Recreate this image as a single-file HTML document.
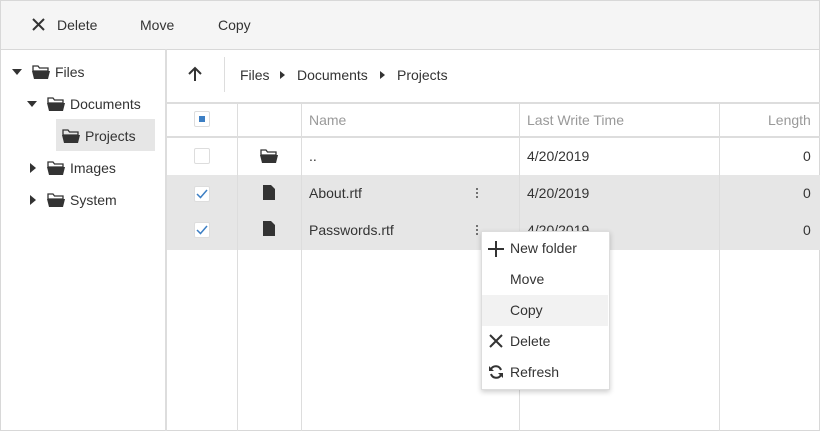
<!DOCTYPE html>
<html><head><style>
*{box-sizing:border-box;margin:0;padding:0}
body{width:820px;height:431px;overflow:hidden;font-family:"Segoe UI","Liberation Sans",sans-serif;font-size:14px;color:#333;background:#fff;position:relative}
.abs{position:absolute}
.t{position:absolute;white-space:nowrap;line-height:16px}
.vl{position:absolute;width:1px;background:#ddd}
.hl{position:absolute;height:1px;background:#ddd}
.cb{position:absolute;width:16px;height:16px;border:1px solid #ddd;background:#fff;border-radius:2px}
.kb{position:absolute;width:2px;height:12px;background:radial-gradient(circle,#555 0.9px,transparent 1.1px) 0 0/2px 4px repeat-y}
</style></head><body>
<div class="abs" style="left:0;top:0;width:820px;height:431px;border:1px solid #d8d8d8"></div>
<div class="abs" style="left:1px;top:1px;width:818px;height:48px;background:#f5f5f5"></div>
<div class="hl" style="left:0;top:49px;width:820px;background:#d8d8d8"></div>
<svg class="abs" style="left:31px;top:17px" width="15" height="15" viewBox="0 0 15 15"><path d="M2 2L13 13M13 2L2 13" stroke="#333" stroke-width="2"/></svg>
<div class="t" style="left:57px;top:17px">Delete</div>
<div class="t" style="left:140px;top:17px">Move</div>
<div class="t" style="left:218px;top:17px">Copy</div>
<div class="vl" style="left:165px;top:49px;height:382px;width:2px;background:#ddd"></div>
<svg class="abs" style="left:12px;top:69px" width="10" height="6"><path d="M0 0H10L5 6Z" fill="#333"/></svg>
<svg class="abs" style="left:32px;top:64px" width="18" height="16" viewBox="0 0 18 16"><path d="M1 2H6L7.5 4H16V7H1Z" fill="none" stroke="#333" stroke-width="1.3"/><path d="M0 7H18L16 15H2Z" fill="#333"/></svg>
<div class="t" style="left:55px;top:64px">Files</div>
<svg class="abs" style="left:27px;top:101px" width="10" height="6"><path d="M0 0H10L5 6Z" fill="#333"/></svg>
<svg class="abs" style="left:47px;top:96px" width="18" height="16" viewBox="0 0 18 16"><path d="M1 2H6L7.5 4H16V7H1Z" fill="none" stroke="#333" stroke-width="1.3"/><path d="M0 7H18L16 15H2Z" fill="#333"/></svg>
<div class="t" style="left:70px;top:96px">Documents</div>
<div class="abs" style="left:56px;top:119px;width:99px;height:32px;background:#e6e6e6"></div>
<svg class="abs" style="left:62px;top:128px" width="18" height="16" viewBox="0 0 18 16"><path d="M1 2H6L7.5 4H16V7H1Z" fill="none" stroke="#333" stroke-width="1.3"/><path d="M0 7H18L16 15H2Z" fill="#333"/></svg>
<div class="t" style="left:85px;top:128px">Projects</div>
<svg class="abs" style="left:30px;top:163px" width="6" height="10"><path d="M0 0V10L6 5Z" fill="#333"/></svg>
<svg class="abs" style="left:47px;top:160px" width="18" height="16" viewBox="0 0 18 16"><path d="M1 2H6L7.5 4H16V7H1Z" fill="none" stroke="#333" stroke-width="1.3"/><path d="M0 7H18L16 15H2Z" fill="#333"/></svg>
<div class="t" style="left:70px;top:160px">Images</div>
<svg class="abs" style="left:30px;top:195px" width="6" height="10"><path d="M0 0V10L6 5Z" fill="#333"/></svg>
<svg class="abs" style="left:47px;top:192px" width="18" height="16" viewBox="0 0 18 16"><path d="M1 2H6L7.5 4H16V7H1Z" fill="none" stroke="#333" stroke-width="1.3"/><path d="M0 7H18L16 15H2Z" fill="#333"/></svg>
<div class="t" style="left:70px;top:192px">System</div>
<svg class="abs" style="left:187px;top:66px" width="16" height="16" viewBox="0 0 16 16"><path d="M8 15V2M2 8L8 2L14 8" fill="none" stroke="#333" stroke-width="2"/></svg>
<div class="vl" style="left:224px;top:57px;height:35px"></div>
<div class="t" style="left:240px;top:67px">Files</div>
<svg class="abs" style="left:280px;top:71px" width="5" height="8"><path d="M0 0V8L5 4Z" fill="#333"/></svg>
<div class="t" style="left:297px;top:67px">Documents</div>
<svg class="abs" style="left:380px;top:71px" width="5" height="8"><path d="M0 0V8L5 4Z" fill="#333"/></svg>
<div class="t" style="left:397px;top:67px">Projects</div>
<div class="hl" style="left:167px;top:102px;width:653px;height:2px"></div>
<div class="abs" style="left:167px;top:175px;width:653px;height:75px;background:#e6e6e6"></div>
<div class="hl" style="left:167px;top:136px;width:653px;height:2px"></div>
<div class="vl" style="left:237px;top:104px;height:327px"></div>
<div class="vl" style="left:301px;top:104px;height:327px"></div>
<div class="vl" style="left:519px;top:104px;height:327px"></div>
<div class="vl" style="left:719px;top:104px;height:327px"></div>
<div class="cb" style="left:194px;top:111px"></div>
<div class="abs" style="left:199px;top:116px;width:6px;height:6px;background:#3d7fc4"></div>
<div class="t" style="left:309px;top:112px;color:#999">Name</div>
<div class="t" style="left:527px;top:112px;color:#999">Last Write Time</div>
<div class="t" style="left:768px;top:112px;color:#999">Length</div>
<div class="cb" style="left:194px;top:148px"></div>
<svg class="abs" style="left:260px;top:148px" width="18" height="16" viewBox="0 0 18 16"><path d="M1 2H6L7.5 4H16V7H1Z" fill="none" stroke="#333" stroke-width="1.3"/><path d="M0 7H18L16 15H2Z" fill="#333"/></svg>
<div class="t" style="left:309px;top:148px">..</div>
<div class="t" style="left:527px;top:148px">4/20/2019</div>
<div class="t" style="left:803px;top:148px">0</div>
<div class="cb" style="left:194px;top:186px"></div>
<svg class="abs" style="left:196px;top:189px" width="12" height="10"><path d="M1 5L4.5 8.5L11 1" fill="none" stroke="#3d7fc4" stroke-width="1.5"/></svg>
<svg class="abs" style="left:262px;top:184px" width="14" height="17" viewBox="0 0 14 17"><path d="M1 1H9L13 5V16H1Z" fill="#333"/></svg>
<div class="t" style="left:309px;top:185px">About.rtf</div>
<div class="kb" style="left:476px;top:187px"></div>
<div class="t" style="left:527px;top:185px">4/20/2019</div>
<div class="t" style="left:803px;top:185px">0</div>
<div class="cb" style="left:194px;top:222px"></div>
<svg class="abs" style="left:196px;top:225px" width="12" height="10"><path d="M1 5L4.5 8.5L11 1" fill="none" stroke="#3d7fc4" stroke-width="1.5"/></svg>
<svg class="abs" style="left:262px;top:220px" width="14" height="17" viewBox="0 0 14 17"><path d="M1 1H9L13 5V16H1Z" fill="#333"/></svg>
<div class="t" style="left:309px;top:222px">Passwords.rtf</div>
<div class="kb" style="left:476px;top:224px"></div>
<div class="t" style="left:527px;top:222px">4/20/2019</div>
<div class="t" style="left:803px;top:222px">0</div>
<div class="abs" style="left:481px;top:231px;width:129px;height:159px;background:#fff;border:1px solid #ddd;box-shadow:0 2px 5px rgba(0,0,0,.2)"></div>
<div class="abs" style="left:482px;top:295px;width:126px;height:31px;background:#f2f2f2"></div>
<svg class="abs" style="left:487px;top:240px" width="18" height="18"><path d="M9 1V17M1 9H17" stroke="#333" stroke-width="2"/></svg>
<div class="t" style="left:510px;top:240px">New folder</div>
<div class="t" style="left:510px;top:271px">Move</div>
<div class="t" style="left:510px;top:302px">Copy</div>
<svg class="abs" style="left:489px;top:334px" width="14" height="14"><path d="M1 1L13 13M13 1L1 13" stroke="#333" stroke-width="2"/></svg>
<div class="t" style="left:510px;top:333px">Delete</div>
<svg class="abs" style="left:488px;top:364px" width="16" height="16" viewBox="0 0 16 16"><path d="M13 6A5.5 5.5 0 0 0 3 5M3 10A5.5 5.5 0 0 0 13 11" fill="none" stroke="#333" stroke-width="2"/><path d="M1 2V7H6ZM15 14V9H10Z" fill="#333"/></svg>
<div class="t" style="left:510px;top:364px">Refresh</div>
</body></html>
